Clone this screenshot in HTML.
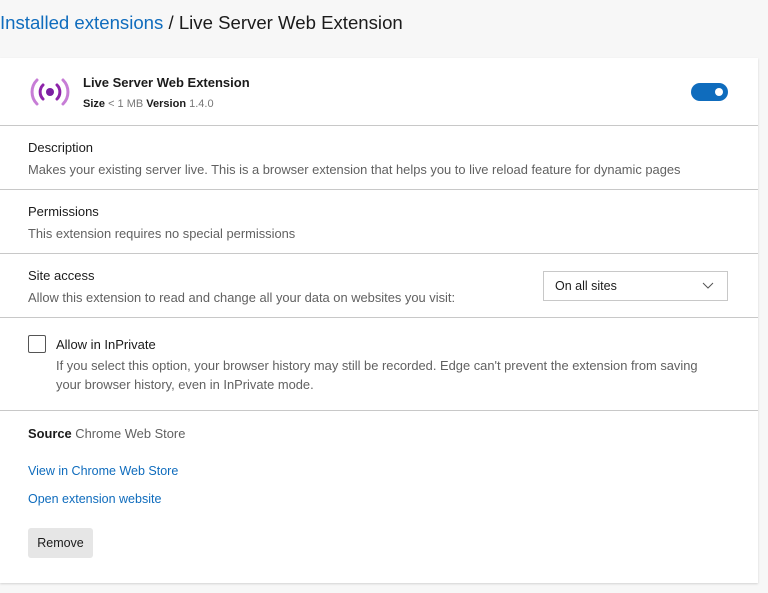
<!DOCTYPE html><html><head><style>
body{margin:0;width:768px;height:593px;background:#f7f7f7;font-family:"Liberation Sans",sans-serif;position:relative;overflow:hidden;color:#1b1b1b}
.t{position:absolute;left:0;top:12px;font-size:18.6px;color:#1b1b1b;white-space:nowrap}
.t a{color:#0f6cbd;text-decoration:none}
.card{position:absolute;left:0;top:58px;width:758px;height:525px;background:#fff;box-shadow:0 1px 2px rgba(0,0,0,.15)}
.a{position:absolute;white-space:nowrap}
.hr{position:absolute;left:0;width:758px;height:1px;background:#c8c8c8}
.b{font-size:13px;color:#1b1b1b}
.g{font-size:12.9px;color:#616161}
.l{font-size:12.5px;color:#0f6cbd}
</style></head><body>
<div class="t"><a>Installed extensions</a> / Live Server Web Extension</div>
<div class="card">
<svg class="a" style="left:30px;top:17px" width="40" height="34" viewBox="0 0 40 34"><circle cx="20" cy="17" r="4" fill="#7b1fa2"/><path d="M13 10a10 10 0 0 0 0 14M27 10a10 10 0 0 1 0 14" stroke="#8e24aa" stroke-width="3" fill="none" stroke-linecap="round"/><path d="M7 5a17 17 0 0 0 0 24M33 5a17 17 0 0 1 0 24" stroke="#c77dd6" stroke-width="3" fill="none" stroke-linecap="round"/></svg>
<div class="a b" style="left:83px;top:17px;font-weight:600">Live Server Web Extension</div>
<div class="a" style="left:83px;top:40px;font-size:11px;color:#777"><b style="color:#1b1b1b">Size</b> &lt; 1 MB <b style="color:#1b1b1b">Version</b> 1.4.0</div>
<div class="a" style="left:691px;top:25px;width:37px;height:18px;border-radius:9px;background:#0f6cbd"><div style="position:absolute;right:5px;top:5px;width:8px;height:8px;border-radius:50%;background:#fff"></div></div>
<div class="hr" style="top:67px"></div>
<div class="a b" style="left:28px;top:82px">Description</div>
<div class="a g" style="left:28px;top:104px">Makes your existing server live. This is a browser extension that helps you to live reload feature for dynamic pages</div>
<div class="hr" style="top:131px"></div>
<div class="a b" style="left:28px;top:146px">Permissions</div>
<div class="a g" style="left:28px;top:168px">This extension requires no special permissions</div>
<div class="hr" style="top:195px"></div>
<div class="a b" style="left:28px;top:210px">Site access</div>
<div class="a g" style="left:28px;top:232px">Allow this extension to read and change all your data on websites you visit:</div>
<div class="a" style="left:543px;top:213px;width:183px;height:28px;border:1px solid #c8c8c8;font-size:12.5px"><span style="position:absolute;left:11px;top:7px">On all sites</span><svg style="position:absolute;right:13px;top:10px" width="12" height="8"><path d="M1 1l5 5 5-5" stroke="#555" fill="none"/></svg></div>
<div class="hr" style="top:259px"></div>
<div class="a" style="left:28px;top:277px;width:16px;height:16px;border:1px solid #555;border-radius:2px"></div>
<div class="a b" style="left:56px;top:279px">Allow in InPrivate</div>
<div class="a g" style="left:56px;top:298px;line-height:19px">If you select this option, your browser history may still be recorded. Edge can't prevent the extension from saving<br>your browser history, even in InPrivate mode.</div>
<div class="hr" style="top:352px"></div>
<div class="a g" style="left:28px;top:368px"><b style="color:#1b1b1b;font-weight:bold">Source</b> Chrome Web Store</div>
<div class="a l" style="left:28px;top:406px">View in Chrome Web Store</div>
<div class="a l" style="left:28px;top:434px">Open extension website</div>
<div class="a" style="left:28px;top:470px;width:65px;height:30px;background:#e6e6e6;border-radius:3px;font-size:12.5px;text-align:center;line-height:30px">Remove</div>
</div>
</body></html>
